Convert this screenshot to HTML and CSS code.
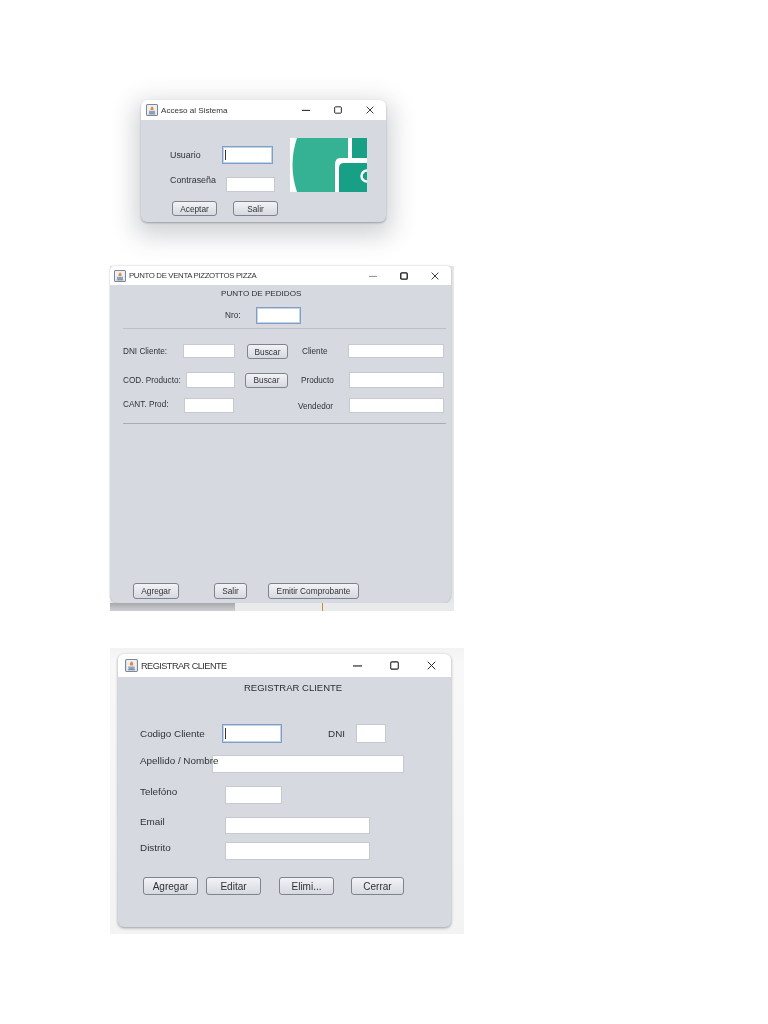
FILE: index.html
```html
<!DOCTYPE html>
<html lang="es">
<head>
<meta charset="utf-8">
<title>Capturas del sistema</title>
<link rel="stylesheet" href="styles.css">
</head>
<body>
<svg class="defs" width="0" height="0" aria-hidden="true">
  <symbol id="java" viewBox="0 0 14 14">
    <rect x=".6" y=".6" width="12.800" height="12.800" rx="1.200" fill="#eef0f4" stroke="#7f8794" stroke-width="1.200"/>
    <path d="M7 2.500c2 1.500 2.300 3 1.500 4.500h-3C4.700 5.500 5.500 4 7 2.500z" fill="#e58a3c"/>
    <path d="M3.500 8h7v1.500l-1 2h-5l-1-2z" fill="#8da2bf"/>
    <path d="M3 11.600h8" stroke="#5f7696"/>
  </symbol>
  <symbol id="min" viewBox="0 0 10 10"><path d="M0 5.500h10" stroke="#222" stroke-width="1.300"/></symbol>
  <symbol id="max" viewBox="0 0 10 10"><rect x=".8" y="1" width="8.400" height="8" rx="1.300" fill="none" stroke="#222" stroke-width="1.200"/></symbol>
  <symbol id="maxb" viewBox="0 0 10 10"><rect x="1" y="1" width="8" height="8" rx="1.300" fill="none" stroke="#111" stroke-width="1.600"/></symbol>
  <symbol id="close" viewBox="0 0 10 10"><path d="M.8.800l8.400 8.400M9.200.800L.8 9.200" stroke="#222" stroke-width="1.100"/></symbol>
</svg>

<main class="doc">
  <section class="shot shot-login">
    <div class="window win-login">
      <header class="titlebar">
        <svg class="app-icon"><use href="#java"/></svg>
        <span class="title-text">Acceso al Sistema</span>
        <span class="controls">
          <svg class="ctl"><use href="#min"/></svg>
          <svg class="ctl"><use href="#max"/></svg>
          <svg class="ctl"><use href="#close"/></svg>
        </span>
      </header>
      <div class="login-body">
        <div class="login-form">
          <div class="row login-r1">
            <span class="label l-usuario">Usuario</span>
            <span class="field focus login-user"><i class="caret"></i></span>
          </div>
          <div class="row login-r2">
            <span class="label l-contra">Contraseña</span>
            <span class="field login-pass"></span>
          </div>
          <div class="row login-r3">
            <button class="btn b-aceptar">Aceptar</button>
            <button class="btn b-salir1">Salir</button>
          </div>
        </div>
        <svg class="logo" viewBox="0 0 77 54" aria-hidden="true">
          <rect width="77" height="54" fill="#fff"/>
          <path d="M7 0H58V20H50Q45 20 45 27V54H7Q-2 27 7 0Z" fill="#35b294"/>
          <rect x="62" width="15" height="20" fill="#17a085"/>
          <path d="M49 54V30Q49 25 54 25H77V54Z" fill="#17a085"/>
          <circle cx="77" cy="38" r="5.500" fill="#17a085" stroke="#fff" stroke-width="2.500"/>
        </svg>
      </div>
    </div>
  </section>

  <section class="shot shot-pedidos">
    <div class="window win-pedidos">
      <header class="titlebar tb-pedidos">
        <svg class="app-icon"><use href="#java"/></svg>
        <span class="title-text">PUNTO DE VENTA PIZZOTTOS PIZZA</span>
        <span class="controls">
          <svg class="ctl ctl-faint"><use href="#min"/></svg>
          <svg class="ctl"><use href="#maxb"/></svg>
          <svg class="ctl"><use href="#close"/></svg>
        </span>
      </header>
      <div class="ped-body">
        <div class="ped-heading">PUNTO DE PEDIDOS</div>
        <div class="row ped-nro">
          <span class="label l-nro">Nro:</span>
          <span class="field focus f-nro"></span>
        </div>
        <hr class="rule rule-a">
        <div class="row ped-r1">
          <span class="label l-dni">DNI Cliente:</span>
          <span class="field f-dni"></span>
          <button class="btn b-buscar1">Buscar</button>
          <span class="label l-cliente">Cliente</span>
          <span class="field f-cliente"></span>
        </div>
        <div class="row ped-r2">
          <span class="label l-cod">COD. Producto:</span>
          <span class="field f-cod"></span>
          <button class="btn b-buscar2">Buscar</button>
          <span class="label l-producto">Producto</span>
          <span class="field f-producto"></span>
        </div>
        <div class="row ped-r3">
          <span class="label l-cant">CANT. Prod:</span>
          <span class="field f-cant"></span>
          <span class="label l-vendedor">Vendedor</span>
          <span class="field f-vendedor"></span>
        </div>
        <hr class="rule rule-b">
        <div class="row ped-actions">
          <button class="btn b-agregar1">Agregar</button>
          <button class="btn b-salir2">Salir</button>
          <button class="btn b-emitir">Emitir Comprobante</button>
        </div>
      </div>
    </div>
    <div class="behind">
      <span class="behind-dark"></span>
      <span class="behind-line"></span>
    </div>
  </section>

  <section class="shot shot-cliente">
    <div class="window win-cliente">
      <header class="titlebar tb-cliente">
        <svg class="app-icon"><use href="#java"/></svg>
        <span class="title-text">REGISTRAR CLIENTE</span>
        <span class="controls">
          <svg class="ctl"><use href="#min"/></svg>
          <svg class="ctl"><use href="#max"/></svg>
          <svg class="ctl"><use href="#close"/></svg>
        </span>
      </header>
      <div class="cli-body">
        <div class="cli-heading">REGISTRAR CLIENTE</div>
        <div class="row cli-r1">
          <span class="label l-codigo">Codigo Cliente</span>
          <span class="field focus f-codigo"><i class="caret"></i></span>
          <span class="label l-dni2">DNI</span>
          <span class="field f-dni2"></span>
        </div>
        <div class="row cli-r2">
          <span class="label l-apellido">Apellido / Nombre</span>
          <span class="field f-apellido"></span>
        </div>
        <div class="row cli-r3">
          <span class="label l-tel">Telefóno</span>
          <span class="field f-tel"></span>
        </div>
        <div class="row cli-r4">
          <span class="label l-email">Email</span>
          <span class="field f-email"></span>
        </div>
        <div class="row cli-r5">
          <span class="label l-email">Distrito</span>
          <span class="field f-email f-distrito"></span>
        </div>
        <div class="row cli-actions">
          <button class="btn cb b-agregar2">Agregar</button>
          <button class="btn cb b-editar">Editar</button>
          <button class="btn cb b-elimi">Elimi...</button>
          <button class="btn cb b-cerrar">Cerrar</button>
        </div>
      </div>
    </div>
  </section>
</main>
</body>
</html>
```

FILE: styles.css
```css
* { box-sizing: border-box; }
html, body { margin: 0; padding: 0; background: #fff; }
body { font-family: "Liberation Sans", Arial, sans-serif; color: #2b2e33; overflow: hidden; height: 1024px; }
.defs { position: absolute; }
.doc { display: flex; flex-direction: column; padding-top: 100px; filter: blur(.4px); }

.shot { display: flex; flex-direction: column; }
.shot-login { margin-left: 141px; width: 245px; }
.shot-pedidos { margin-left: 110px; margin-top: 44px; width: 344px; background: #e6e7e9; height: 345px; }
.shot-cliente { margin-left: 110px; margin-top: 37px; width: 354px; height: 286px; padding: 6px 13px 7px 8px; background: linear-gradient(#f3f3f3, #f8f8f8 5%, #f3f3f3); }

.window { background: #d6d9e0; display: flex; flex-direction: column; border-radius: 6px; }
.win-login { height: 122px; box-shadow: 0 8px 24px 6px rgba(60,65,80,.24), 0 1px 2px rgba(60,65,80,.4); }
.win-pedidos { width: 341px; height: 337px; border-radius: 4px 4px 8px 8px; box-shadow: 0 0 2px rgba(0,0,0,.3); }
.win-cliente { height: 273px; box-shadow: 0 1px 3px rgba(60,65,80,.5); }

.titlebar { display: flex; align-items: center; height: 20px; background: #fff; border-radius: 6px 6px 0 0; padding-left: 5px; flex: none; }
.tb-pedidos { height: 19px; padding-left: 4px; border-radius: 4px 4px 0 0; }
.tb-cliente { height: 23px; padding-left: 7px; }
.app-icon { width: 12px; height: 12px; flex: none; }
.tb-cliente .app-icon { width: 13px; height: 13px; }
.title-text { font-size: 8.100px; margin-left: 3px; color: #333; white-space: nowrap; }
.tb-pedidos .title-text { font-size: 7.800px; letter-spacing: -.33px; }
.tb-cliente .title-text { font-size: 9.200px; margin-left: 3px; letter-spacing: -.55px; }
.controls { margin-left: auto; display: flex; align-items: center; gap: 24px; padding-right: 12px; }
.tb-pedidos .controls { gap: 23px; padding-right: 12px; }
.tb-cliente .controls { gap: 28px; padding-right: 15px; }
.ctl { width: 8px; height: 8px; }
.tb-cliente .ctl { width: 9px; height: 9px; }
.ctl-faint { opacity: .5; }

.row { display: flex; align-items: center; }
.label { font-size: 8.200px; color: #2f3238; white-space: nowrap; flex: none; }
.field { display: block; flex: none; background: #fff; border: 1px solid #c6c9d0; position: relative; }
.field.focus { border: 1px solid #7f9fc6; box-shadow: inset 0 0 0 1px #c3d3e6; }
.caret { position: absolute; left: 2px; top: 3px; bottom: 3px; width: 1px; background: #333; }
.btn { flex: none; height: 15px; padding: 0; margin: 0; font: 8.300px "Liberation Sans", Arial, sans-serif; color: #2f3238; background: linear-gradient(#f2f3f6, #d6d9e0); border: 1px solid #7f838c; border-radius: 3px; }

/* login */
.login-body { display: flex; flex: 1; padding: 18px 0 0 29px; }
.login-form { display: flex; flex-direction: column; width: 120px; flex: none; }
.login-r1 { margin-top: 8px; height: 18px; }
.l-usuario { width: 52px; font-size: 8.900px; }
.login-user { width: 51px; height: 18px; }
.login-r2 { margin-top: 13px; height: 15px; }
.l-contra { width: 56px; margin-top: -9px; font-size: 8.900px; }
.login-pass { width: 49px; height: 15px; }
.login-r3 { margin-top: 9px; margin-left: 2px; gap: 16px; }
.b-aceptar, .b-salir1 { width: 45px; }
.logo { width: 77px; height: 54px; flex: none; }

/* pedidos */
.ped-body { display: flex; flex-direction: column; flex: 1; }
.ped-heading { font-size: 8.100px; line-height: 12px; margin: 3px 0 0 111px; }
.ped-nro { margin: 7px 0 0 115px; }
.l-nro { width: 31px; }
.f-nro { width: 45px; height: 17px; }
.rule { border: 0; margin: 0 0 0 13px; width: 323px; height: 1px; background: #bcc0c8; flex: none; }
.rule-a { margin-top: 4px; }
.rule-b { margin-top: 10px; background: #a8acb4; }
.ped-r1 { margin: 15px 0 0 13px; height: 15px; }
.l-dni { width: 60px; }
.f-dni { width: 52px; height: 14px; margin-bottom: 1px; }
.b-buscar1 { width: 41px; margin-left: 12px; }
.l-cliente { width: 46px; margin-left: 14px; }
.f-cliente { width: 96px; height: 14px; margin-bottom: 1px; }
.ped-r2 { margin: 13px 0 0 13px; height: 16px; }
.l-cod { width: 63px; }
.f-cod { width: 49px; height: 16px; }
.b-buscar2 { width: 43px; margin-left: 10px; }
.l-producto { width: 48px; margin-left: 13px; }
.f-producto { width: 95px; height: 16px; }
.ped-r3 { margin: 10px 0 0 13px; height: 15px; }
.l-cant { width: 61px; margin-top: -3px; }
.f-cant { width: 50px; height: 15px; }
.l-vendedor { width: 51px; margin-left: 64px; margin-top: 1px; }
.f-vendedor { width: 95px; height: 15px; }
.ped-actions { margin: 159px 0 0 23px; height: 16px; }
.ped-actions .btn { height: 16px; }
.b-agregar1 { width: 46px; }
.b-salir2 { width: 33px; margin-left: 35px; }
.b-emitir { width: 91px; margin-left: 21px; }

.behind { height: 8px; position: relative; background: #e9eaec; flex: none; }
.behind-dark { display: block; width: 125px; height: 8px; background: linear-gradient(#a6a8ac, #cfd0d3); }
.behind-line { position: absolute; left: 212px; top: 0; width: 1px; height: 8px; background: #c98a3c; }

/* cliente */
.cli-body { display: flex; flex-direction: column; flex: 1; padding-left: 22px; }
.cli-heading { font-size: 9.500px; line-height: 12px; margin: 5px 0 0 104px; }
.cli-body .label { font-size: 9.900px; }
.cli-body .btn { font-size: 10px; }
.cli-r1 { margin-top: 30px; height: 19px; }
.l-codigo { width: 82px; }
.f-codigo { width: 60px; height: 19px; }
.l-dni2 { width: 28px; margin-left: 46px; }
.f-dni2 { width: 30px; height: 19px; }
.cli-r2 { margin-top: 12px; height: 18px; }
.l-apellido { width: 72px; margin-top: -7px; position: relative; z-index: 1; }
.f-apellido { width: 192px; height: 18px; }
.cli-r3 { margin-top: 13px; height: 18px; }
.l-tel { width: 85px; margin-top: -7px; }
.f-tel { width: 57px; height: 18px; }
.cli-r4 { margin-top: 13px; height: 17px; }
.l-email { width: 85px; margin-top: -8px; }
.f-email { width: 145px; height: 17px; }
.cli-r5 { margin-top: 8px; height: 18px; }
.f-distrito { height: 18px; }
.cli-actions { margin: 17px 0 0 3px; }
.cb { height: 18px; }
.b-agregar2 { width: 55px; }
.b-editar { width: 55px; margin-left: 8px; }
.b-elimi { width: 55px; margin-left: 18px; }
.b-cerrar { width: 53px; margin-left: 17px; }
```
